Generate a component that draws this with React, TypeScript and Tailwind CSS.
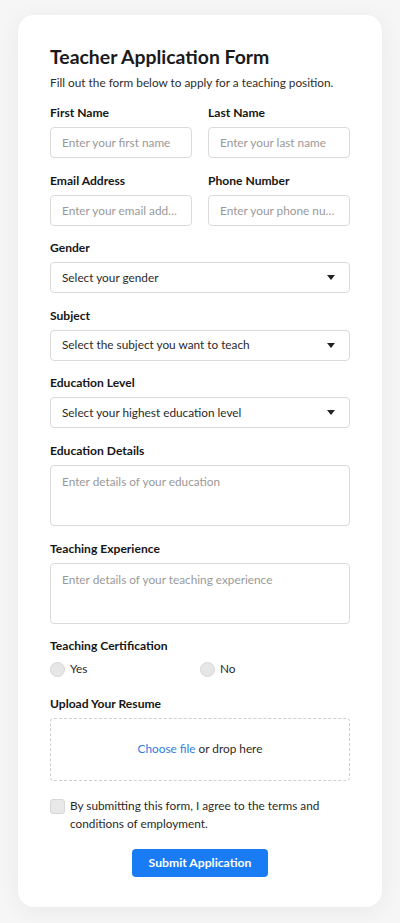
import React from "react";

const font = { fontFamily: 'Lato, "Noto Sans", sans-serif' };

const Label = ({ children }: { children: React.ReactNode }) => (
  <label className="mb-[6px] block text-[12.1px] font-bold leading-[17px] text-[#161616]">
    {children}
  </label>
);

const TextInput = ({ label, placeholder }: { label: string; placeholder: string }) => (
  <div className="min-w-0">
    <Label>{label}</Label>
    <input
      type="text"
      placeholder={placeholder}
      className="h-[31px] w-full truncate rounded-[4px] border border-[#dadada] bg-white px-[11px] text-[11.8px] text-[#333] outline-none placeholder:text-[#999]"
    />
  </div>
);

const Select = ({ label, text }: { label: string; text: string }) => (
  <div>
    <Label>{label}</Label>
    <div className="flex h-[31px] w-full items-center justify-between rounded-[4px] border border-[#dadada] bg-white pl-[11px] pr-[14px] text-[11.8px] text-[#2a2a2a]">
      <span>{text}</span>
      <svg width="8" height="5" viewBox="0 0 8 5">
        <path d="M0 0h8L4 5z" fill="#222" />
      </svg>
    </div>
  </div>
);

const TextArea = ({ label, placeholder }: { label: string; placeholder: string }) => (
  <div>
    <Label>{label}</Label>
    <textarea
      placeholder={placeholder}
      className="block h-[61px] w-full resize-none rounded-[4px] border border-[#dadada] bg-white px-[11px] pt-[7px] text-[11.8px] leading-[17px] text-[#333] outline-none placeholder:text-[#999]"
    />
  </div>
);

const Radio = ({ label }: { label: string }) => (
  <label className="flex w-[150px] items-center gap-[5px] text-[11.8px] leading-4 text-[#2a2a2a]">
    <span className="block h-[15px] w-[15px] rounded-full border border-[#d6d6d6] bg-[#e6e6e6]" />
    {label}
  </label>
);

export default function App() {
  return (
    <div className="min-h-screen bg-[#f6f6f6] px-[18px] pb-4 pt-[15px]" style={font}>
      <div className="rounded-2xl bg-white px-8 pb-[30px] pt-7 shadow-[0_4px_24px_rgba(0,0,0,0.06)]">
        <h1 className="text-[19.4px] font-bold leading-7 text-[#1a1a1a]">
          Teacher Application Form
        </h1>
        <p className="mt-[3px] text-[11.8px] leading-[18px] text-[#2e2e2e]">
          Fill out the form below to apply for a teaching position.
        </p>

        <form className="mt-3 flex flex-col gap-[13.6px]">
          <div className="grid grid-cols-2 gap-x-4 gap-y-[13.6px]">
            <TextInput label="First Name" placeholder="Enter your first name" />
            <TextInput label="Last Name" placeholder="Enter your last name" />
            <TextInput label="Email Address" placeholder="Enter your email address" />
            <TextInput label="Phone Number" placeholder="Enter your phone number" />
          </div>

          <Select label="Gender" text="Select your gender" />
          <Select label="Subject" text="Select the subject you want to teach" />
          <Select label="Education Level" text="Select your highest education level" />

          <TextArea label="Education Details" placeholder="Enter details of your education" />
          <TextArea
            label="Teaching Experience"
            placeholder="Enter details of your teaching experience"
          />

          <div className="mb-1">
            <Label>Teaching Certification</Label>
            <div className="mt-[7px] flex">
              <Radio label="Yes" />
              <Radio label="No" />
            </div>
          </div>

          <div>
            <Label>Upload Your Resume</Label>
            <div className="flex h-[63px] items-center justify-center rounded-[4px] border border-dashed border-[#cfcfcf] text-[11.8px] text-[#2a2a2a]">
              <span className="text-[#2f7de1]">Choose file</span>
              <span>&nbsp;or drop here</span>
            </div>
          </div>

          <label className="mt-[3px] flex gap-[5px] text-[11.8px] leading-[18px] text-[#2a2a2a]">
            <span className="mt-[2px] block h-[15px] w-[15px] shrink-0 rounded-[3px] border border-[#d6d6d6] bg-[#e8e8e8]" />
            <span className="pr-6">
              By submitting this form, I agree to the terms and conditions of employment.
            </span>
          </label>

          <div className="mt-[2px] flex justify-center">
            <button
              type="button"
              className="h-[28px] w-[136px] rounded-[4px] bg-[#1a7cf5] text-[12.2px] font-bold text-white"
            >
              Submit Application
            </button>
          </div>
        </form>
      </div>
    </div>
  );
}
